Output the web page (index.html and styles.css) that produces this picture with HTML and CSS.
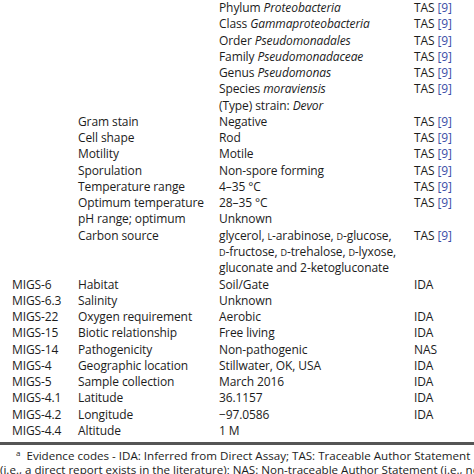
FILE: index.html
```html
<!DOCTYPE html>
<html>
<head>
<meta charset="utf-8">
<link rel="stylesheet" href="styles.css">
</head>
<body>
<table class="tbl">
<colgroup><col class="c1"><col class="c2"><col class="c3"><col class="c4"></colgroup>
<tbody>
<tr><td></td><td></td><td>Phylum <i>Proteobacteria</i></td><td>TAS <a>[9]</a></td></tr>
<tr><td></td><td></td><td>Class <i>Gammaproteobacteria</i></td><td>TAS <a>[9]</a></td></tr>
<tr><td></td><td></td><td>Order <i>Pseudomonadales</i></td><td>TAS <a>[9]</a></td></tr>
<tr><td></td><td></td><td>Family <i>Pseudomonadaceae</i></td><td>TAS <a>[9]</a></td></tr>
<tr><td></td><td></td><td>Genus <i>Pseudomonas</i></td><td>TAS <a>[9]</a></td></tr>
<tr><td></td><td></td><td>Species <i>moraviensis</i></td><td>TAS <a>[9]</a></td></tr>
<tr><td></td><td></td><td>(Type) strain: <i>Devor</i></td><td></td></tr>
<tr><td></td><td>Gram stain</td><td>Negative</td><td>TAS <a>[9]</a></td></tr>
<tr><td></td><td>Cell shape</td><td>Rod</td><td>TAS <a>[9]</a></td></tr>
<tr><td></td><td>Motility</td><td>Motile</td><td>TAS <a>[9]</a></td></tr>
<tr><td></td><td>Sporulation</td><td>Non-spore forming</td><td>TAS <a>[9]</a></td></tr>
<tr><td></td><td>Temperature range</td><td>4–35 °C</td><td>TAS <a>[9]</a></td></tr>
<tr><td></td><td>Optimum temperature</td><td>28–35 °C</td><td>TAS <a>[9]</a></td></tr>
<tr><td></td><td>pH range; optimum</td><td>Unknown</td><td></td></tr>
<tr><td></td><td>Carbon source</td><td>glycerol, <span class="sc">L</span>-arabinose, <span class="sc">D</span>-glucose,<br><span class="sc">D</span>-fructose, <span class="sc">D</span>-trehalose, <span class="sc">D</span>-lyxose,<br>gluconate and 2-ketogluconate</td><td>TAS <a>[9]</a></td></tr>
<tr><td>MIGS-6</td><td>Habitat</td><td>Soil/Gate</td><td>IDA</td></tr>
<tr><td>MIGS-6.3</td><td>Salinity</td><td>Unknown</td><td></td></tr>
<tr><td>MIGS-22</td><td>Oxygen requirement</td><td>Aerobic</td><td>IDA</td></tr>
<tr><td>MIGS-15</td><td>Biotic relationship</td><td>Free living</td><td>IDA</td></tr>
<tr><td>MIGS-14</td><td>Pathogenicity</td><td>Non-pathogenic</td><td>NAS</td></tr>
<tr><td>MIGS-4</td><td>Geographic location</td><td>Stillwater, OK, USA</td><td>IDA</td></tr>
<tr><td>MIGS-5</td><td>Sample collection</td><td>March 2016</td><td>IDA</td></tr>
<tr><td>MIGS-4.1</td><td>Latitude</td><td>36.1157</td><td>IDA</td></tr>
<tr><td>MIGS-4.2</td><td>Longitude</td><td>−97.0586</td><td>IDA</td></tr>
<tr><td>MIGS-4.4</td><td>Altitude</td><td>1 M</td><td></td></tr>
</tbody>
</table>
<div class="foot">
<p class="l1"><sup>a</sup> Evidence codes - IDA: Inferred from Direct Assay; TAS: Traceable Author Statement</p>
<p class="l2">(i.e., a direct report exists in the literature); NAS: Non-traceable Author Statement (i.e., not</p>
</div>
</body>
</html>
```
FILE: styles.css
```css
html, body {
  margin: 0;
  padding: 0;
  background: #fff;
  overflow: hidden;
}
body {
  font-family: "Open Sans", "Lato", sans-serif;
  color: #1c1c1c;
  width: 474px;
  height: 474px;
}
.tbl {
  border-collapse: collapse;
  table-layout: fixed;
  width: 474px;
  font-size: 12px;
  line-height: 16.27px;
  letter-spacing: -0.1px;
}
.c1 { width: 78px; }
.c2 { width: 141px; }
.c3 { width: 195px; }
.c4 { width: 60px; }
.tbl td {
  padding: 0;
  vertical-align: top;
  white-space: nowrap;
}
.tbl td:first-child { padding-left: 12px; }
.tbl a { color: #3a4ea6; }
.sc { font-size: 9px; line-height: 1; }
.foot {
  border-top: 3px solid #555;
  margin-top: 3px;
  font-size: 11.6px;
  line-height: 14px;
}
.foot p { margin: 0; white-space: nowrap; }
.l1 { padding-left: 16px; margin-top: 4px !important; }
.l1 sup { font-size: 8px; vertical-align: 4px; line-height: 0; margin-right: 3px; }
```
